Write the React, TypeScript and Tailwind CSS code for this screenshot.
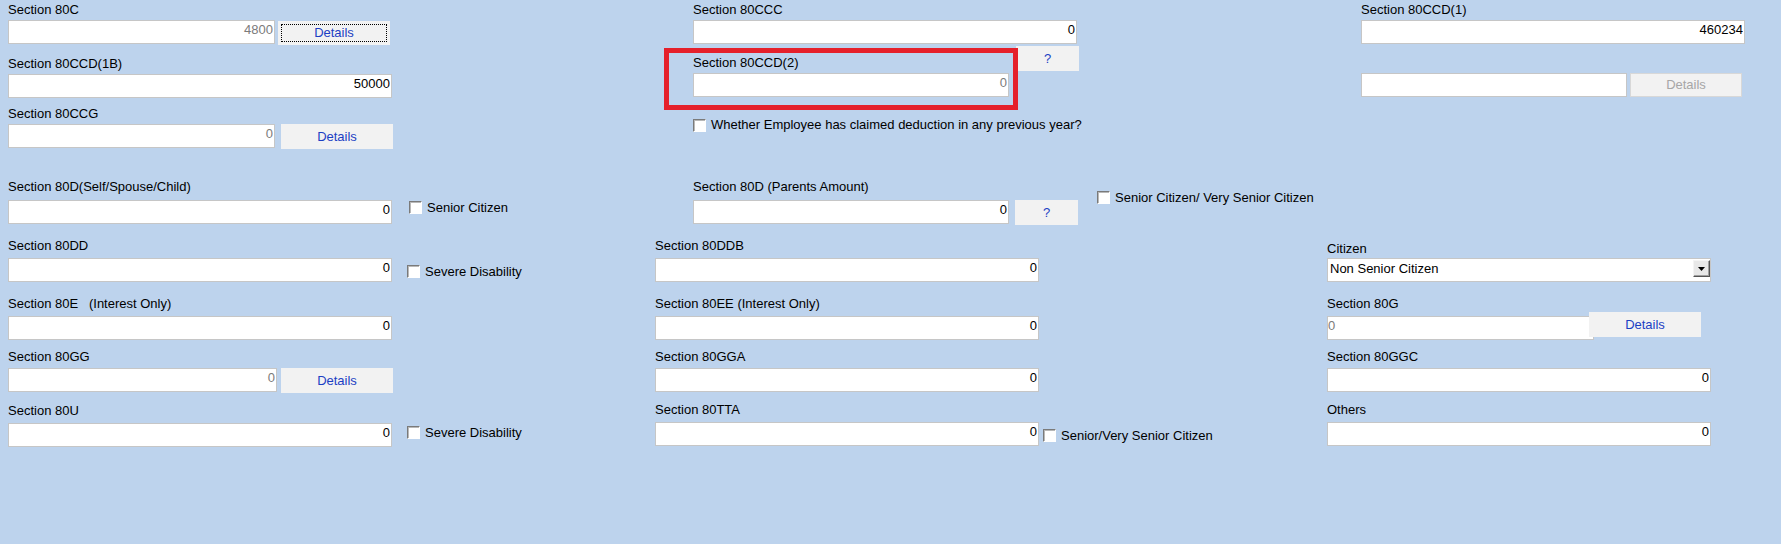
import React from 'react'

type BoxProps = {
  value?: string
  w?: string
  muted?: boolean
  left?: boolean
}

// flat win-forms style text box, value drawn a bit high like the original
function TextBox({ value = '', w = 'w-[384px]', muted, left }: BoxProps) {
  return (
    <input
      readOnly
      value={value}
      className={`${w} h-[24px] shrink-0 border border-[#c6c6c6] bg-white pt-0 pb-[5px] text-[13px] leading-[17px] outline-none ${
        left ? 'pl-0 pr-[1px] text-left' : 'px-[1px] text-right'
      } ${muted ? 'text-[#7b7b7b]' : 'text-black'}`}
    />
  )
}

function Btn({
  children,
  className = '',
  disabled,
  focused,
}: {
  children: React.ReactNode
  className?: string
  disabled?: boolean
  focused?: boolean
}) {
  return (
    <button
      type="button"
      className={`${className} shrink-0 bg-[#f2f2f2] text-[13px] leading-[16px] ${
        disabled ? 'border border-[#d8d8d8] text-[#a6a6a6]' : 'text-[#1c3fc4]'
      } ${focused ? 'outline-1 outline-dotted outline-black outline-offset-[-4px]' : ''}`}
    >
      {children}
    </button>
  )
}

function Label({ children, className = 'h-[19px]' }: { children: React.ReactNode; className?: string }) {
  return <div className={`${className} shrink-0 whitespace-pre leading-[18px]`}>{children}</div>
}

function Check() {
  return (
    <span className="block h-[13px] w-[13px] shrink-0 border border-t-[#7a7a7a] border-l-[#7a7a7a] border-r-white border-b-white bg-white shadow-[inset_1px_1px_0_#b8b8b8]" />
  )
}

function CheckLabel({ children, className = '' }: { children: React.ReactNode; className?: string }) {
  return (
    <div className={`${className} flex h-[13px] shrink-0 items-center whitespace-nowrap`}>
      <Check />
      <span className="ml-[5px] leading-[13px]">{children}</span>
    </div>
  )
}

function CitizenSelect() {
  return (
    <div className="flex h-[24px] w-[384px] items-center border border-[#c6c6c6] bg-white pl-[2px]">
      <span className="mb-[3px] leading-[16px]">Non Senior Citizen</span>
      <span className="ml-auto mt-[1px] flex h-[17px] w-[17px] items-center justify-center self-start border border-t-[#f4f4f4] border-l-[#f4f4f4] border-r-[#555] border-b-[#555] bg-[#e8e8e8] shadow-[inset_-1px_-1px_0_#a0a0a0]">
        <svg width="7" height="4" viewBox="0 0 7 4">
          <polygon points="0,0 7,0 3.5,4" fill="#000" />
        </svg>
      </span>
    </div>
  )
}

export default function App() {
  return (
    <div className="h-[544px] w-[1781px] overflow-hidden bg-[#bdd3ed] font-['Liberation_Sans',Arial,sans-serif] text-[13px] text-black">
      {/* top block */}
      <div className="flex items-start pl-[8px] pt-[1px]">
        <div className="flex w-[685px] shrink-0 flex-col">
          <Label>Section 80C</Label>
          <div className="flex items-start">
            <TextBox w="w-[267px]" value="4800" muted />
            <Btn className="ml-[3px] mt-[1px] h-[24px] w-[112px]" focused>
              Details
            </Btn>
          </div>
          <Label className="mt-[10px] h-[19px]">Section 80CCD(1B)</Label>
          <TextBox value="50000" />
          <Label className="mt-[7px] h-[19px]">Section 80CCG</Label>
          <div className="flex items-start">
            <TextBox w="w-[267px]" value="0" muted />
            <Btn className="ml-[6px] h-[25px] w-[112px]">Details</Btn>
          </div>
        </div>

        <div className="flex w-[668px] shrink-0 flex-col">
          <Label>Section 80CCC</Label>
          <TextBox value="0" />
          <Btn className="ml-[323px] mt-[2px] h-[25px] w-[63px]">?</Btn>
          <div className="relative -mt-[17px]">
            <div className="pointer-events-none absolute left-[-29px] top-[-6px] h-[62px] w-[354px] border-[5px] border-[#e5202b]" />
            <Label>Section 80CCD(2)</Label>
            <TextBox w="w-[316px]" value="0" muted />
          </div>
          <div className="mt-[20px] flex h-[16px] items-center">
            <Check />
            <span className="ml-[5px] leading-[16px]">Whether Employee has claimed deduction in any previous year?</span>
          </div>
        </div>

        <div className="flex flex-col">
          <Label>Section 80CCD(1)</Label>
          <TextBox value="460234" />
          <div className="mt-[29px] flex items-start">
            <TextBox w="w-[266px]" />
            <Btn className="ml-[3px] h-[24px] w-[112px]" disabled>
              Details
            </Btn>
          </div>
        </div>
      </div>

      {/* 80D row */}
      <div className="mt-[29px] flex items-start pl-[8px]">
        <div className="flex w-[685px] shrink-0 items-start">
          <div className="flex flex-col">
            <Label className="h-[22px]">Section 80D(Self/Spouse/Child)</Label>
            <TextBox value="0" />
          </div>
          <CheckLabel className="ml-[17px] mt-[23px]">Senior Citizen</CheckLabel>
        </div>
        <div className="flex items-start">
          <div className="flex flex-col">
            <Label className="h-[22px]">Section 80D (Parents Amount)</Label>
            <div className="flex items-start">
              <TextBox w="w-[316px]" value="0" />
              <Btn className="ml-[6px] h-[25px] w-[63px]">?</Btn>
            </div>
          </div>
          <CheckLabel className="ml-[19px] mt-[13px]">Senior Citizen/ Very Senior Citizen</CheckLabel>
        </div>
      </div>

      {/* lower block */}
      <div className="mt-[12px] flex items-start pl-[8px]">
        <div className="flex w-[647px] shrink-0 flex-col">
          <Label className="h-[21px]">Section 80DD</Label>
          <div className="flex items-start">
            <TextBox value="0" />
            <CheckLabel className="ml-[15px] mt-[7px]">Severe Disability</CheckLabel>
          </div>
          <Label className="mt-[13px] h-[21px]">Section 80E   (Interest Only)</Label>
          <TextBox value="0" />
          <Label className="mt-[8px] h-[20px]">Section 80GG</Label>
          <div className="flex items-start">
            <TextBox w="w-[269px]" value="0" muted />
            <Btn className="ml-[4px] h-[25px] w-[112px]">Details</Btn>
          </div>
          <Label className="mt-[9px] h-[21px]">Section 80U</Label>
          <div className="flex items-start">
            <TextBox value="0" />
            <CheckLabel className="ml-[15px] mt-[3px]">Severe Disability</CheckLabel>
          </div>
        </div>

        <div className="flex w-[672px] shrink-0 flex-col">
          <Label className="h-[21px]">Section 80DDB</Label>
          <TextBox value="0" />
          <Label className="mt-[13px] h-[21px]">Section 80EE (Interest Only)</Label>
          <TextBox value="0" />
          <Label className="mt-[8px] h-[20px]">Section 80GGA</Label>
          <TextBox value="0" />
          <Label className="mt-[9px] h-[21px]">Section 80TTA</Label>
          <div className="flex items-start">
            <TextBox value="0" />
            <CheckLabel className="ml-[4px] mt-[7px]">Senior/Very Senior Citizen</CheckLabel>
          </div>
        </div>

        <div className="flex flex-col">
          <Label className="mt-[3px] h-[18px]">Citizen</Label>
          <CitizenSelect />
          <Label className="mt-[13px] h-[21px]">Section 80G</Label>
          <div className="flex items-start">
            <TextBox w="w-[267px]" value="0" muted left />
            <Btn className="-ml-[5px] -mt-[4px] h-[25px] w-[112px]">Details</Btn>
          </div>
          <Label className="mt-[8px] h-[20px]">Section 80GGC</Label>
          <TextBox value="0" />
          <Label className="mt-[9px] h-[21px]">Others</Label>
          <TextBox value="0" />
        </div>
      </div>
    </div>
  )
}
